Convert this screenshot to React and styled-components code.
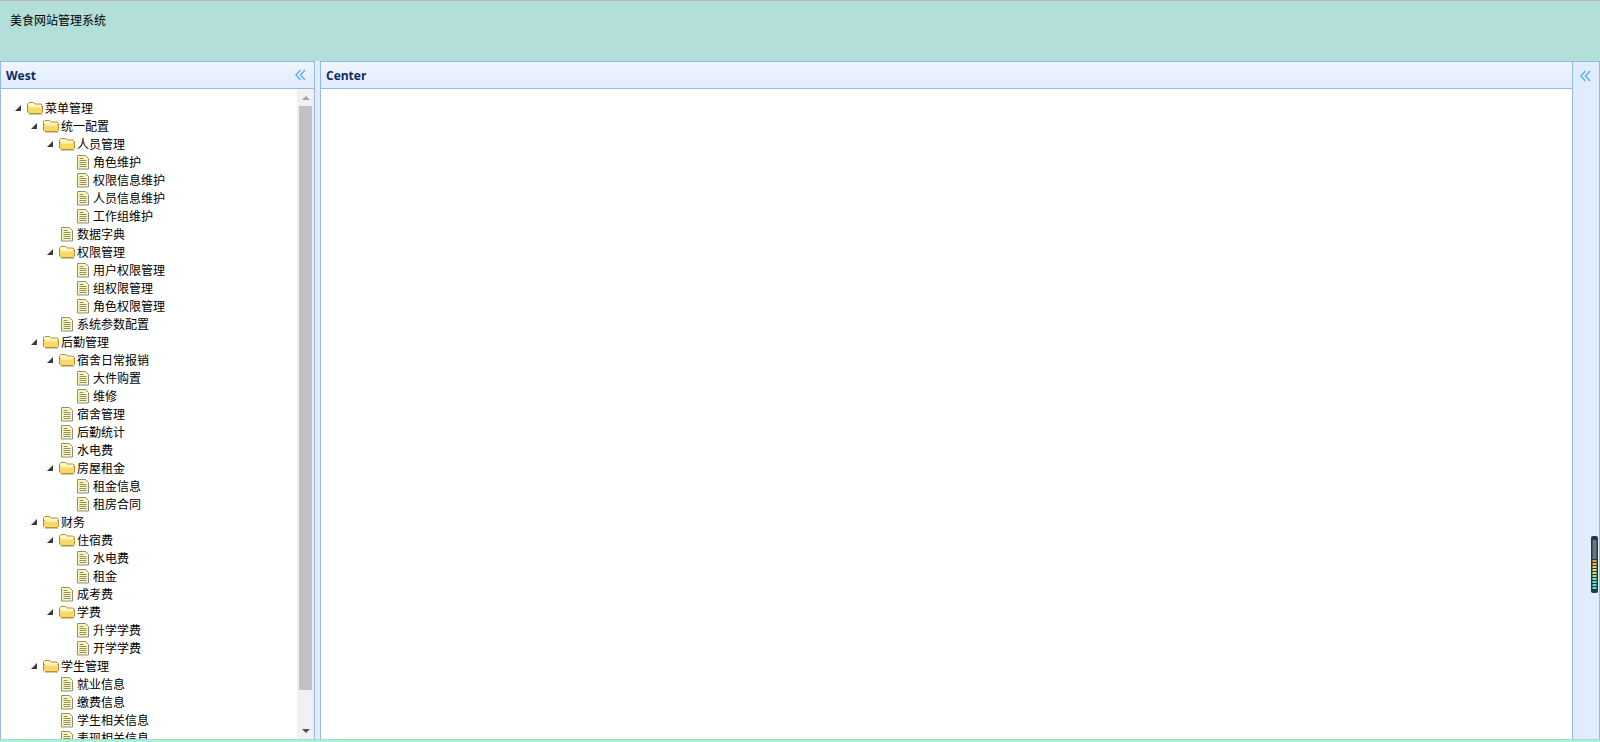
import styled, { createGlobalStyle } from "styled-components";

const menu = [
  {
    name: "菜单管理",
    children: [
      {
        name: "统一配置",
        children: [
          {
            name: "人员管理",
            children: [
              { name: "角色维护" },
              { name: "权限信息维护" },
              { name: "人员信息维护" },
              { name: "工作组维护" },
            ],
          },
          { name: "数据字典" },
          {
            name: "权限管理",
            children: [
              { name: "用户权限管理" },
              { name: "组权限管理" },
              { name: "角色权限管理" },
            ],
          },
          { name: "系统参数配置" },
        ],
      },
      {
        name: "后勤管理",
        children: [
          {
            name: "宿舍日常报销",
            children: [{ name: "大件购置" }, { name: "维修" }],
          },
          { name: "宿舍管理" },
          { name: "后勤统计" },
          { name: "水电费" },
          {
            name: "房屋租金",
            children: [{ name: "租金信息" }, { name: "租房合同" }],
          },
        ],
      },
      {
        name: "财务",
        children: [
          {
            name: "住宿费",
            children: [{ name: "水电费" }, { name: "租金" }],
          },
          { name: "成考费" },
          {
            name: "学费",
            children: [{ name: "升学学费" }, { name: "开学学费" }],
          },
        ],
      },
      {
        name: "学生管理",
        children: [
          { name: "就业信息" },
          { name: "缴费信息" },
          { name: "学生相关信息" },
          { name: "表现相关信息" },
        ],
      },
    ],
  },
];

const CollapseIcon = () => (
  <svg width="12" height="12" viewBox="0 0 12 12" fill="none" stroke="#62aef0" strokeWidth="1.5">
    <path d="M5.5 1 1 6l4.5 5" />
    <path d="M10 1 5.5 6l4.5 5" />
  </svg>
);

const ArrowIcon = () => (
  <svg width="16" height="18" viewBox="0 0 16 18">
    <path d="M10 6v6H4z" fill="#3c3c3c" />
    <path d="M10 6 4 12" stroke="#a0a0a0" strokeWidth="1" />
  </svg>
);

const FolderIcon = () => (
  <svg width="16" height="18" viewBox="0 0 16 18">
    <path d="M2 15.5h13.5" stroke="#cfcab8" strokeWidth="1" />
    <path
      d="M0.5 5 2 3.5h4.5L8 5h6l1.5 1.5v7L14 14.5H2L0.5 13z"
      fill="#fff8cc"
      stroke="#b8902c"
      strokeWidth="1"
    />
    <path d="M1 8.5 2 7.5h12l1 1V13l-1 1H2l-1-1z" fill="#f8d868" />
    <path d="M2 8h12" stroke="#fff6c0" strokeWidth="1" />
    <path d="M1 7.5h0.8M14.2 7.5H15" stroke="#c9a33f" strokeWidth="1" />
  </svg>
);

const FileIcon = () => (
  <svg width="16" height="18" viewBox="0 0 16 18">
    <path d="M2.5 2.5h8l3 3v10.5h-11z" fill="#fdf8b8" stroke="#8c8c80" strokeWidth="1" />
    <path
      d="M4.5 5.5h4M4.5 7.5h7M4.5 9.5h7M4.5 11.5h7M4.5 13.5h7"
      stroke="#8f8f70"
      strokeWidth="1"
    />
  </svg>
);

const MeterIcon = () => {
  const colors = [
    "#f0a030", "#f4bc38", "#f4d040", "#e8e050", "#c4e860",
    "#a0e878", "#80e890", "#60e8b0", "#50e8c8", "#48e4dc",
  ];
  return (
    <svg width="7" height="57" viewBox="0 0 7 57">
      <rect x="0" y="0" width="7" height="57" rx="2" fill="#1f3a48" />
      <rect x="1.5" y="4" width="4" height="19" fill="#6f7478" />
      {colors.map((c, i) => (
        <rect key={c} x="1.5" y={24 + i * 3} width="4" height="2" fill={c} />
      ))}
    </svg>
  );
};

const TreeNode = ({ node, level }) => {
  const isFolder = Boolean(node.children);
  return (
    <>
      <Row $level={isFolder ? level : level + 1}>
        {isFolder && <ArrowIcon />}
        {isFolder ? <FolderIcon /> : <FileIcon />}
        <Title>{node.name}</Title>
      </Row>
      {isFolder &&
        node.children.map((child) => (
          <TreeNode key={child.name + level} node={child} level={level + 1} />
        ))}
    </>
  );
};

const App = () => {
  return (
    <Page>
      <GlobalStyle />
      <North>美食网站管理系统</North>
      <Main>
        <West>
          <Header>
            <HeaderTitle>West</HeaderTitle>
            <CollapseButton>
              <CollapseIcon />
            </CollapseButton>
          </Header>
          <WestBody>
            <Tree>
              {menu.map((node) => (
                <TreeNode key={node.name} node={node} level={0} />
              ))}
            </Tree>
            <ScrollTrack>
              <ScrollButton $up />
              <ScrollThumb />
              <ScrollButton />
            </ScrollTrack>
          </WestBody>
        </West>
        <Center>
          <Header>
            <HeaderTitle>Center</HeaderTitle>
          </Header>
          <CenterBody />
        </Center>
        <East>
          <CollapseIcon />
        </East>
      </Main>
      <Meter>
        <MeterIcon />
      </Meter>
    </Page>
  );
};

const GlobalStyle = createGlobalStyle`
  html, body {
    margin: 0;
    padding: 0;
    height: 100%;
    overflow: hidden;
  }
  body {
    background: #aef0d6;
    font-family: "Noto Sans CJK SC", "Liberation Sans", sans-serif;
    font-size: 12px;
  }
`;

const Page = styled.div`
  position: relative;
  height: 742px;
  display: flex;
  flex-direction: column;
  padding-bottom: 2px;
  box-sizing: border-box;
`;

const North = styled.div`
  height: 61px;
  box-sizing: border-box;
  flex-shrink: 0;
  background: #b2dfda;
  border-top: 1px solid #b9b9b9;
  padding: 10px 10px 0;
  font-size: 12px;
  line-height: 18px;
  color: #000;
`;

const Main = styled.div`
  flex: 1;
  min-height: 0;
  display: flex;
  background: #e0ecff;
  border-bottom: 1px solid #a0dcdc;
`;

const West = styled.div`
  width: 315px;
  flex-shrink: 0;
  display: flex;
  flex-direction: column;
  box-sizing: border-box;
  border: 1px solid #95b8e7;
  border-bottom: 0;
  margin-right: 5px;
`;

const Center = styled.div`
  flex: 1;
  min-width: 0;
  display: flex;
  flex-direction: column;
  box-sizing: border-box;
  border: 1px solid #95b8e7;
  border-bottom: 0;
  border-right: 0;
`;

const East = styled.div`
  width: 28px;
  flex-shrink: 0;
  box-sizing: border-box;
  border: 1px solid #95b8e7;
  border-bottom: 0;
  display: flex;
  justify-content: center;
  padding-top: 8px;
`;

const Header = styled.div`
  height: 27px;
  flex-shrink: 0;
  box-sizing: border-box;
  display: flex;
  align-items: center;
  justify-content: space-between;
  padding: 0 7px 0 5px;
  background: linear-gradient(to bottom, #eff5ff, #e0ecff);
  border-bottom: 1px solid #95b8e7;
`;

const HeaderTitle = styled.span`
  font-family: "Open Sans", "Liberation Sans", sans-serif;
  font-size: 12px;
  font-weight: 700;
  color: #0e2d5f;
`;

const CollapseButton = styled.span`
  display: flex;
`;

const WestBody = styled.div`
  flex: 1;
  min-height: 0;
  display: flex;
  background: #fff;
`;

const Tree = styled.div`
  flex: 1;
  min-width: 0;
  overflow: hidden;
  padding: 10px 0 0 10px;
`;

const Row = styled.div`
  height: 18px;
  display: flex;
  align-items: center;
  padding-left: ${(p) => p.$level * 16}px;
  white-space: nowrap;

  svg {
    flex-shrink: 0;
  }
`;

const Title = styled.span`
  padding: 0 2px;
  font-size: 12px;
  line-height: 18px;
  color: #000;
`;

const ScrollTrack = styled.div`
  width: 17px;
  flex-shrink: 0;
  display: flex;
  flex-direction: column;
  align-items: center;
  background: #f1f1f1;
`;

const ScrollButton = styled.div`
  height: 17px;
  flex-shrink: 0;
  display: flex;
  align-items: center;
  justify-content: center;
  margin-top: ${(p) => (p.$up ? 0 : "auto")};

  &::after {
    content: "";
    border-left: 4px solid transparent;
    border-right: 4px solid transparent;
    border-${(p) => (p.$up ? "bottom" : "top")}: 4px solid ${(p) => (p.$up ? "#a3a3a3" : "#505050")};
  }
`;

const ScrollThumb = styled.div`
  width: 13px;
  height: 584px;
  background: #c1c1c1;
`;

const CenterBody = styled.div`
  flex: 1;
  background: #fff;
`;

const Meter = styled.div`
  position: absolute;
  top: 536px;
  left: 1591px;
  display: flex;
`;

export default App;
